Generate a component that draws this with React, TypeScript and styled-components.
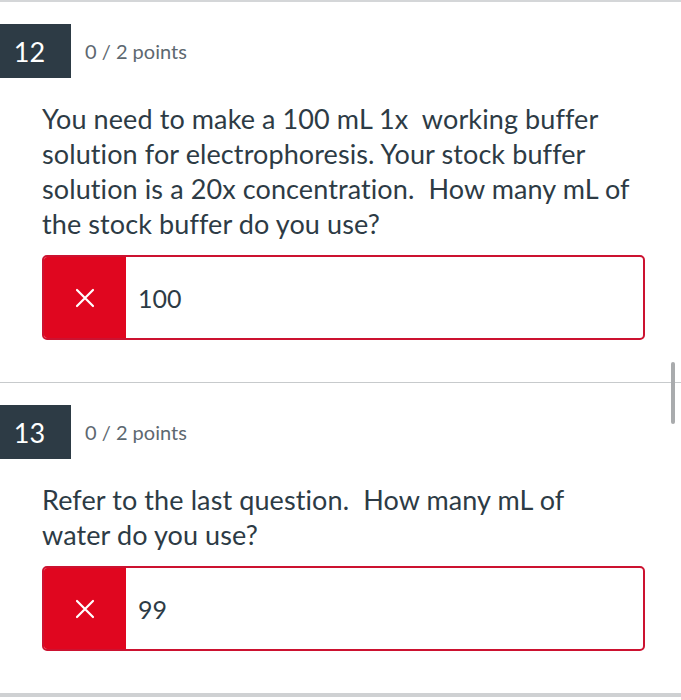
import React from 'react';
import styled, { createGlobalStyle } from 'styled-components';

const GlobalStyle = createGlobalStyle`
  html, body {
    margin: 0;
    padding: 0;
    background: #fff;
  }
  body {
    font-family: Lato, "Open Sans", sans-serif;
    color: #2d3b45;
    font-variant-ligatures: none;
  }
`;

type Question = {
  number: number;
  points: string;
  text: string;
  answer: string;
};

const questions: Question[] = [
  {
    number: 12,
    points: '0 / 2 points',
    text:
      'You need to make a 100 mL 1x  working buffer solution for electrophoresis. Your stock buffer solution is a 20x concentration.  How many mL of the stock buffer do you use?',
    answer: '100',
  },
  {
    number: 13,
    points: '0 / 2 points',
    text: 'Refer to the last question.  How many mL of water do you use?',
    answer: '99',
  },
];

const App: React.FC = () => {
  return (
    <>
      <GlobalStyle />
      <Page>
        {questions.map((q, i) => (
          <Block key={q.number} $last={i === questions.length - 1}>
            <Header>
              <Badge>{q.number}</Badge>
              <Points>{q.points}</Points>
            </Header>
            <QuestionText>{q.text}</QuestionText>
            <AnswerBox>
              <Mark>
                <svg width="20" height="20" viewBox="0 0 20 20">
                  <path d="M2 2 L18 18 M18 2 L2 18" stroke="#fff" strokeWidth="2.2" strokeLinecap="round" />
                </svg>
              </Mark>
              <AnswerValue>{q.answer}</AnswerValue>
            </AnswerBox>
          </Block>
        ))}
        <ScrollThumb />
      </Page>
    </>
  );
};

export default App;

const Page = styled.div`
  position: relative;
  width: 681px;
  height: 700px;
  overflow: hidden;
  border-top: 2px solid #d4d6d8;
  box-sizing: border-box;
  padding-top: 22px;
`;

const Block = styled.section<{ $last: boolean }>`
  padding-bottom: 42px;
  margin-bottom: 22px;
  border-bottom: ${(p) => (p.$last ? '4px solid #cfd1d3' : '1px solid #c7cacc')};
`;

const Header = styled.div`
  display: flex;
  align-items: center;
  height: 54px;
`;

const Badge = styled.div`
  width: 71px;
  height: 54px;
  background: #2d3b45;
  color: #fff;
  font-size: 27px;
  display: flex;
  align-items: center;
  justify-content: center;
  box-sizing: border-box;
  padding-right: 12px;
`;

const Points = styled.div`
  margin-left: 14px;
  font-size: 20px;
  color: #5d6870;
`;

const QuestionText = styled.p`
  margin: 23px 46px 0 42px;
  font-size: 27px;
  line-height: 35px;
  letter-spacing: 0.1px;
  white-space: pre-wrap;
  color: #2d3b45;
`;

const AnswerBox = styled.div`
  margin: 14px 36px 0 42px;
  height: 85px;
  display: flex;
  align-items: stretch;
  border: 2px solid #cc1230;
  border-radius: 5px;
  box-sizing: border-box;
  overflow: hidden;
`;

const Mark = styled.div`
  width: 82px;
  background: #e0061f;
  display: flex;
  align-items: center;
  justify-content: center;
`;

const AnswerValue = styled.div`
  display: flex;
  align-items: center;
  padding-left: 12px;
  font-size: 25px;
  color: #2d3b45;
`;

const ScrollThumb = styled.div`
  position: absolute;
  top: 360px;
  left: 671px;
  width: 4px;
  height: 62px;
  border-radius: 2px;
  background: #a9abad;
`;
